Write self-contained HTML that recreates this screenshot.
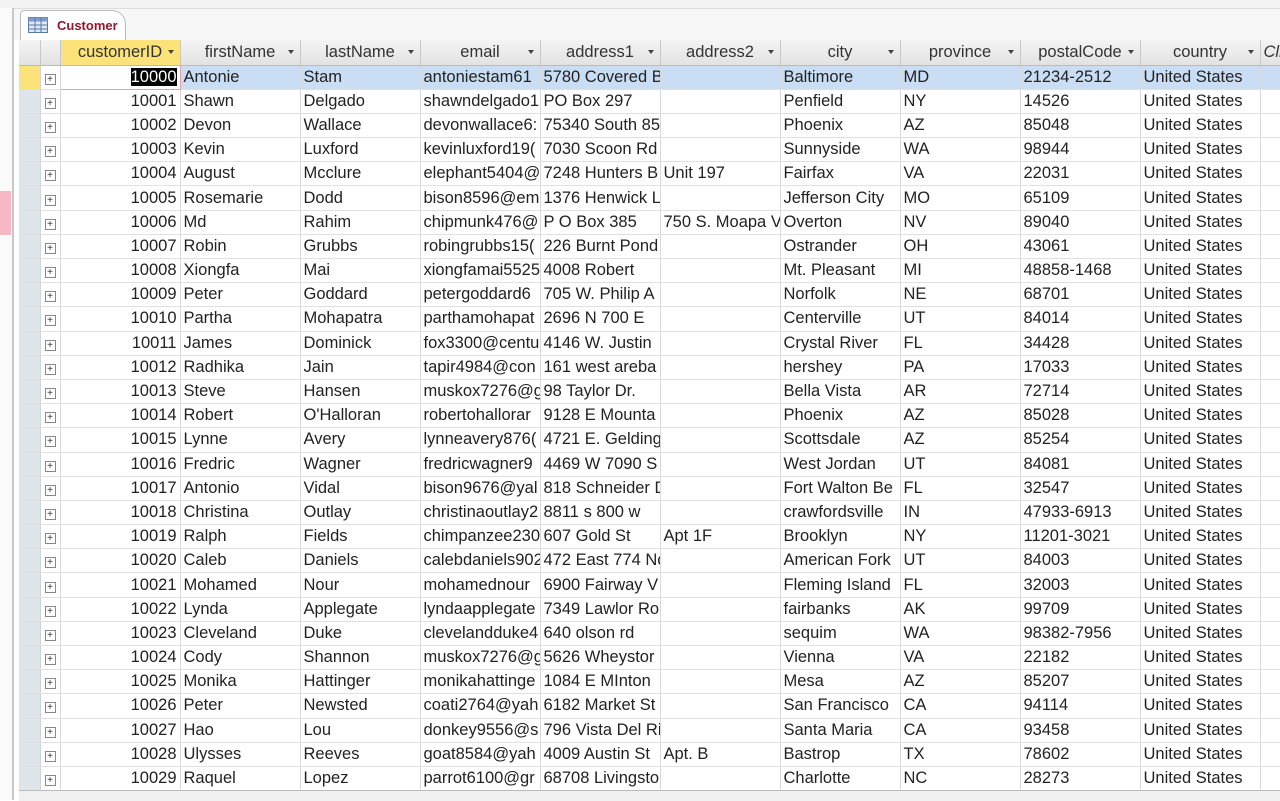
<!DOCTYPE html>
<html><head><style>
body{margin:0;width:1280px;height:800px;overflow:hidden;background:#fff;font-family:"Liberation Sans",sans-serif;position:relative}
.top{position:absolute;left:0;top:0;width:1280px;height:8px;background:#f3f3f3;border-bottom:1px solid #ddd}
.lp{position:absolute;left:0;top:8px;width:12px;height:792px;background:#fafafa;border-right:2px solid #c8c8c8}
.pink{position:absolute;left:0;top:191px;width:11px;height:44px;background:#f6b8c4}
.tabbar{position:absolute;left:14px;top:9px;width:1266px;height:31px;background:#f7f7f7}
.tab{position:absolute;left:20px;top:10px;width:104px;height:30px;background:#fff;border:1px solid #bbb;border-bottom:none;border-radius:4px 14px 0 0}
.tab span{position:absolute;left:36px;top:7px;color:#8b1a2e;font-weight:bold;font-size:13px}
.grid{position:absolute;left:19px;top:40px;width:1301px;border-collapse:collapse;table-layout:fixed;font-size:16.5px;color:#222}
.grid td,.grid th{height:23.2px;padding:0 3px;border-right:1px solid #d8d8d8;border-bottom:1px solid #e0e0e0;white-space:nowrap;overflow:hidden;text-align:left;font-weight:normal}
.grid th{background:linear-gradient(#f4f4f4,#e2e2e2);border-right:1px solid #c8c8c8;border-bottom:1px solid #bbb;text-align:center;position:relative;color:#333;height:24.5px}
.grid th:after{content:"";position:absolute;right:6px;top:10px;border:3px solid transparent;border-top:4px solid #444}
.grid th.n:after{display:none}
.grid th.y{background:#fbe37a}
.grid td.s{background:#dfe3ea;border-right:1px solid #cfd3da}
.grid td.x{background:#fff;text-align:center;padding:0}
.x i{display:inline-block;width:9px;height:9px;border:1px solid #888;font-style:normal;font-size:10px;line-height:9px;color:#333}
.grid td.id{text-align:right}
tr.sel td{background:#c9def5}
tr.sel td.s{background:#fbe37a}
tr.sel td.id{background:#fff;border:1px solid #e7a0a8}
.hl{background:#000;color:#fff}
.foot{position:absolute;left:19px;top:790px;width:1261px;height:10px;background:#f0f0f0;border-top:1px solid #bbb}
</style></head><body>
<div class="top"></div><div class="lp"></div><div class="pink"></div>
<div class="tabbar"></div>
<div class="tab"><svg style="position:absolute;left:7px;top:6px" width="20" height="16"><rect x="0.5" y="0.5" width="19" height="15" fill="#dfe8f4" stroke="#5a7aa8"/><rect x="0.5" y="0.5" width="19" height="4" fill="#7d9cc8"/><path d="M7 0v16M13 0v16M0 8h20M0 12h20" stroke="#5a7aa8"/></svg><span>Customer</span></div>
<table class="grid">
<colgroup><col style="width:21px"><col style="width:20px"><col style="width:120px"><col style="width:120px"><col style="width:120px"><col style="width:120px"><col style="width:120px"><col style="width:120px"><col style="width:120px"><col style="width:120px"><col style="width:120px"><col style="width:120px"><col style="width:60px"></colgroup>
<tr><th class="n"></th><th class="n"></th><th class="y">customerID</th><th>firstName</th><th>lastName</th><th>email</th><th>address1</th><th>address2</th><th>city</th><th>province</th><th>postalCode</th><th>country</th><th class="n" style="text-align:left;font-style:italic">Cli</th></tr>
<tbody id="b"></tbody>
</table>
<div class="foot"></div>
<script>
var d=[["Antonie","Stam","antoniestam61","5780 Covered B","","Baltimore","MD","21234-2512"],
["Shawn","Delgado","shawndelgado1","PO Box 297","","Penfield","NY","14526"],
["Devon","Wallace","devonwallace6:","75340 South 85","","Phoenix","AZ","85048"],
["Kevin","Luxford","kevinluxford19(","7030 Scoon Rd","","Sunnyside","WA","98944"],
["August","Mcclure","elephant5404@","7248 Hunters B","Unit 197","Fairfax","VA","22031"],
["Rosemarie","Dodd","bison8596@em","1376 Henwick L","","Jefferson City","MO","65109"],
["Md","Rahim","chipmunk476@","P O Box 385","750 S. Moapa V","Overton","NV","89040"],
["Robin","Grubbs","robingrubbs15(","226 Burnt Pond","","Ostrander","OH","43061"],
["Xiongfa","Mai","xiongfamai5525","4008 Robert","","Mt. Pleasant","MI","48858-1468"],
["Peter","Goddard","petergoddard6","705 W. Philip A","","Norfolk","NE","68701"],
["Partha","Mohapatra","parthamohapat","2696 N 700 E","","Centerville","UT","84014"],
["James","Dominick","fox3300@centu","4146 W. Justin","","Crystal River","FL","34428"],
["Radhika","Jain","tapir4984@con","161 west areba","","hershey","PA","17033"],
["Steve","Hansen","muskox7276@g","98 Taylor Dr.","","Bella Vista","AR","72714"],
["Robert","O'Halloran","robertohallorar","9128 E Mounta","","Phoenix","AZ","85028"],
["Lynne","Avery","lynneavery876(","4721 E. Gelding","","Scottsdale","AZ","85254"],
["Fredric","Wagner","fredricwagner9","4469 W 7090 S","","West Jordan","UT","84081"],
["Antonio","Vidal","bison9676@yal","818 Schneider D","","Fort Walton Be","FL","32547"],
["Christina","Outlay","christinaoutlay2","8811 s 800 w","","crawfordsville","IN","47933-6913"],
["Ralph","Fields","chimpanzee230","607 Gold St","Apt 1F","Brooklyn","NY","11201-3021"],
["Caleb","Daniels","calebdaniels902","472 East 774 No","","American Fork","UT","84003"],
["Mohamed","Nour","mohamednour","6900 Fairway V","","Fleming Island","FL","32003"],
["Lynda","Applegate","lyndaapplegate","7349 Lawlor Ro","","fairbanks","AK","99709"],
["Cleveland","Duke","clevelandduke4","640 olson rd","","sequim","WA","98382-7956"],
["Cody","Shannon","muskox7276@g","5626 Wheystor","","Vienna","VA","22182"],
["Monika","Hattinger","monikahattinge","1084 E MInton","","Mesa","AZ","85207"],
["Peter","Newsted","coati2764@yah","6182 Market St","","San Francisco","CA","94114"],
["Hao","Lou","donkey9556@s","796 Vista Del Ri","","Santa Maria","CA","93458"],
["Ulysses","Reeves","goat8584@yah","4009 Austin St","Apt. B","Bastrop","TX","78602"],
["Raquel","Lopez","parrot6100@gr","68708 Livingsto","","Charlotte","NC","28273"]];
var h="";d.forEach(function(r,i){var id=10000+i;h+='<tr'+(i==0?' class="sel"':'')+'><td class="s"></td><td class="x"><i>+</i></td><td class="id">'+(i==0?'<span class="hl">'+id+'</span>':id)+'</td>';r.forEach(function(c){h+='<td>'+c+'</td>'});h+='<td>United States</td><td></td></tr>'});
document.getElementById("b").innerHTML=h;
</script>
</body></html>
